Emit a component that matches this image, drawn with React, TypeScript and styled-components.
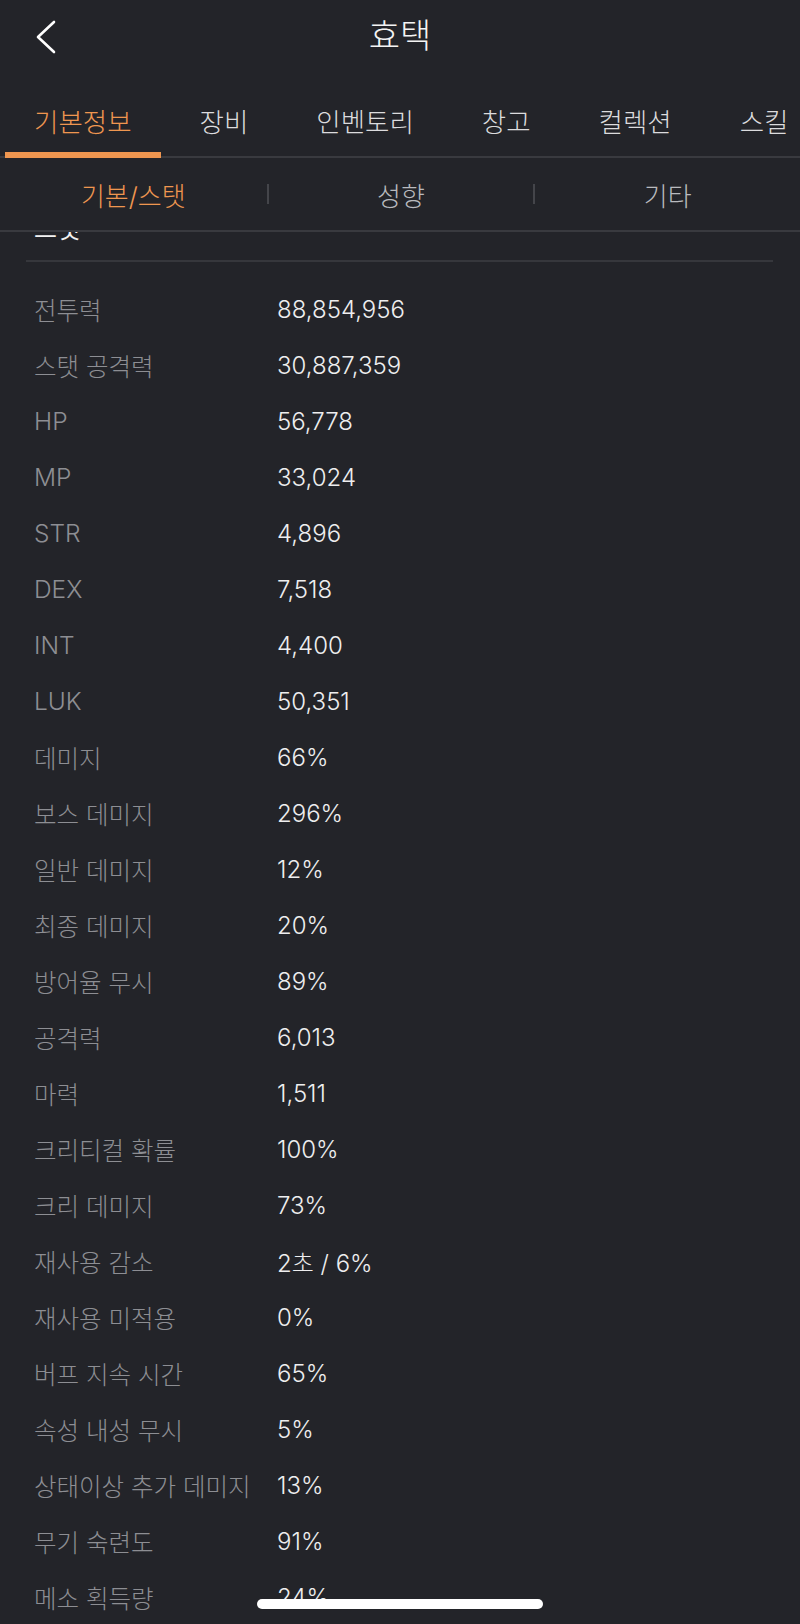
import React from "react"
import styled, { createGlobalStyle } from "styled-components"

const GlobalStyle = createGlobalStyle`
  html, body {
    margin: 0;
    padding: 0;
    background: #232429;
  }
  * {
    box-sizing: border-box;
  }
`

const font = `Inter, "Noto Sans CJK KR", "Noto Sans", sans-serif`

const Screen = styled.div`
  position: relative;
  width: 800px;
  height: 1624px;
  overflow: hidden;
  background: #232429;
  font-family: ${font};
  display: flex;
  flex-direction: column;
`

const NavBar = styled.header`
  height: 72px;
  flex: none;
  display: flex;
  align-items: center;
  justify-content: center;
  position: relative;
  .back {
    position: absolute;
    left: 34px;
    top: 20px;
  }
  h1 {
    margin: 0;
    font-size: 34px;
    font-weight: 300;
    color: #f4f4f4;
    line-height: 1;
  }
`

const TabBar = styled.nav`
  height: 86px;
  flex: none;
  display: flex;
  gap: 10px;
  padding-left: 5px;
  overflow: hidden;
  box-shadow: inset 0 -2px 0 #393a3f;
`

const Tab = styled.div<{ $active?: boolean }>`
  flex: none;
  height: 100%;
  display: flex;
  align-items: center;
  padding: 10px 29px 0;
  font-size: 26.5px;
  font-weight: 300;
  white-space: nowrap;
  color: ${p => (p.$active ? "#ef9650" : "#dcdcde")};
  box-shadow: ${p => (p.$active ? "inset 0 -6px 0 #ef9650" : "none")};
`

const SubTabBar = styled.div`
  height: 74px;
  flex: none;
  display: grid;
  grid-template-columns: repeat(3, 1fr);
  align-items: center;
  border-bottom: 2px solid #393a3f;
`

const SubTab = styled.div<{ $active?: boolean; $divider?: boolean }>`
  height: 20px;
  display: flex;
  align-items: center;
  justify-content: center;
  font-size: 26px;
  font-weight: 300;
  color: ${p => (p.$active ? "#ef9650" : "#b9babe")};
  border-left: ${p => (p.$divider ? "2px solid #44454a" : "none")};
`

const Content = styled.main`
  flex: 1;
  overflow: hidden;
`

const SectionTitle = styled.h2`
  margin: -18px 0 0 34px;
  font-size: 25px;
  line-height: 30px;
  font-weight: 400;
  color: #f2f2f2;
`

const Divider = styled.hr`
  margin: 16px 27px 0 26px;
  border: none;
  height: 2px;
  background: #36373c;
`

const StatList = styled.dl`
  margin: 0;
  padding: 19px 0 0 34px;
`

const StatRow = styled.div`
  height: 56px;
  display: grid;
  grid-template-columns: 243px 1fr;
  align-items: center;
  font-weight: 300;
  dt {
    font-size: 24.5px;
    color: #8d8e93;
    white-space: nowrap;
  }
  dd {
    margin: 0;
    font-size: 24px;
    color: #eeeeef;
  }
`

const HomeIndicator = styled.div`
  position: absolute;
  left: 257px;
  top: 1599px;
  width: 286px;
  height: 10px;
  border-radius: 5px;
  background: #ffffff;
`

const tabs = ["기본정보", "장비", "인벤토리", "창고", "컬렉션", "스킬"]
const subTabs = ["기본/스탯", "성향", "기타"]

const stats: [string, string][] = [
  ["전투력", "88,854,956"],
  ["스탯 공격력", "30,887,359"],
  ["HP", "56,778"],
  ["MP", "33,024"],
  ["STR", "4,896"],
  ["DEX", "7,518"],
  ["INT", "4,400"],
  ["LUK", "50,351"],
  ["데미지", "66%"],
  ["보스 데미지", "296%"],
  ["일반 데미지", "12%"],
  ["최종 데미지", "20%"],
  ["방어율 무시", "89%"],
  ["공격력", "6,013"],
  ["마력", "1,511"],
  ["크리티컬 확률", "100%"],
  ["크리 데미지", "73%"],
  ["재사용 감소", "2초 / 6%"],
  ["재사용 미적용", "0%"],
  ["버프 지속 시간", "65%"],
  ["속성 내성 무시", "5%"],
  ["상태이상 추가 데미지", "13%"],
  ["무기 숙련도", "91%"],
  ["메소 획득량", "24%"],
]

const App = () => {
  return (
    <Screen>
      <GlobalStyle />
      <NavBar>
        <svg className="back" width="24" height="34" viewBox="0 0 24 34" fill="none">
          <path d="M20 2 L4 17 L20 32" stroke="#ffffff" strokeWidth="2.6" strokeLinecap="round" strokeLinejoin="round" />
        </svg>
        <h1>효택</h1>
      </NavBar>
      <TabBar>
        {tabs.map((t, i) => (
          <Tab key={t} $active={i === 0}>
            {t}
          </Tab>
        ))}
      </TabBar>
      <SubTabBar>
        {subTabs.map((t, i) => (
          <SubTab key={t} $active={i === 0} $divider={i > 0}>
            {t}
          </SubTab>
        ))}
      </SubTabBar>
      <Content>
        <SectionTitle>스탯</SectionTitle>
        <Divider />
        <StatList>
          {stats.map(([label, value]) => (
            <StatRow key={label}>
              <dt>{label}</dt>
              <dd>{value}</dd>
            </StatRow>
          ))}
        </StatList>
      </Content>
      <HomeIndicator />
    </Screen>
  )
}

export default App
